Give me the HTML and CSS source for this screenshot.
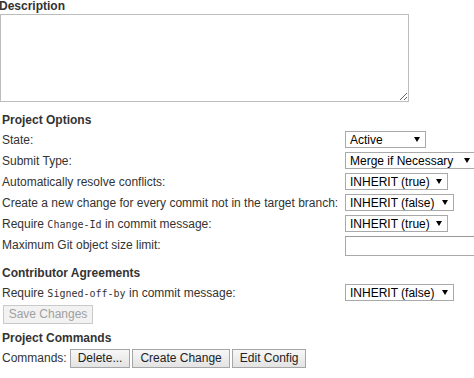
FILE: index.html
```html
<!DOCTYPE html>
<html lang="en">
<head>
  <meta charset="UTF-8" />
  <title>Project Settings</title>
  <link rel="stylesheet" href="styles.css">
</head>
<body>
  <div class="page">
    <h2 class="title desc-title">Description</h2>
    <textarea class="description"></textarea>

    <h2 class="title options-title">Project Options</h2>
    <table class="options">
      <tr>
        <td class="label">State:</td>
        <td><span class="select"><select class="w-state">
          <option>Active</option><option>Read Only</option><option>Hidden</option>
        </select></span></td>
      </tr>
      <tr>
        <td class="label">Submit Type:</td>
        <td><span class="select"><select class="w-submit">
          <option>Merge if Necessary</option><option>Fast Forward Only</option><option>Rebase if Necessary</option>
        </select></span></td>
      </tr>
      <tr>
        <td class="label">Automatically resolve conflicts:</td>
        <td><span class="select"><select class="w-true">
          <option>INHERIT (true)</option><option>TRUE</option><option>FALSE</option>
        </select></span></td>
      </tr>
      <tr>
        <td class="label">Create a new change for every commit not in the target branch:</td>
        <td><span class="select"><select class="w-false">
          <option>INHERIT (false)</option><option>TRUE</option><option>FALSE</option>
        </select></span></td>
      </tr>
      <tr>
        <td class="label">Require <code>Change-Id</code> in commit message:</td>
        <td><span class="select"><select class="w-true">
          <option>INHERIT (true)</option><option>TRUE</option><option>FALSE</option>
        </select></span></td>
      </tr>
      <tr class="input-row">
        <td class="label">Maximum Git object size limit:</td>
        <td><input type="text" class="size-limit"></td>
      </tr>
    </table>

    <h2 class="title agreements-title">Contributor Agreements</h2>
    <table class="options">
      <tr>
        <td class="label">Require <code>Signed-off-by</code> in commit message:</td>
        <td><span class="select"><select class="w-false">
          <option>INHERIT (false)</option><option>TRUE</option><option>FALSE</option>
        </select></span></td>
      </tr>
    </table>

    <button class="btn save" disabled>Save Changes</button>

    <h2 class="title commands-title">Project Commands</h2>
    <div class="commands">
      <span class="commands-label">Commands:</span>
      <div class="command-buttons">
        <button class="btn">Delete...</button>
        <button class="btn">Create Change</button>
        <button class="btn">Edit Config</button>
      </div>
    </div>
  </div>
</body>
</html>
```

FILE: styles.css
```css
body {
  margin: 0;
  font-family: 'Liberation Sans', Arial, sans-serif;
  font-size: 12px;
  color: #333;
  background: #fff;
  overflow: hidden;
}

.title {
  font-size: 12px;
  font-weight: bold;
  line-height: 14px;
  color: #333;
  margin: 0;
  padding-left: 2px;
}

.desc-title {
  margin-top: -1px;
  padding-left: 0;
  margin-left: -1px;
}

.description {
  display: block;
  box-sizing: border-box;
  width: 409px;
  height: 88px;
  margin: 1px 0 0 0;
  border: 1px solid #bdbdbd;
  font-family: inherit;
}

.options-title {
  margin-top: 11px;
}

.agreements-title {
  margin-top: 8px;
}

.commands-title {
  margin-top: 7px;
}

.options {
  border-collapse: collapse;
  table-layout: fixed;
  width: 490px;
  margin-top: 2px;
}

.options td {
  padding: 2px;
  vertical-align: baseline;
  white-space: nowrap;
  line-height: 14px;
}

.options td.label {
  box-sizing: border-box;
  width: 343px;
}

code {
  font-family: 'DejaVu Sans Mono', monospace;
  font-size: 10px;
}

.select {
  position: relative;
  display: inline-block;
}

.select::after {
  content: "";
  position: absolute;
  right: 6px;
  top: 6px;
  border-left: 3px solid transparent;
  border-right: 3px solid transparent;
  border-top: 5px solid #000;
  pointer-events: none;
}

select {
  -webkit-appearance: none;
  appearance: none;
  box-sizing: border-box;
  height: 17px;
  padding: 0 14px 0 4px;
  margin: 0;
  border: 1px solid #a9a9a9;
  border-radius: 0;
  background: #fff;
  font-family: inherit;
  font-size: 12px;
  color: #000;
}

.w-state { width: 81px; }
.w-submit { width: 131px; }
.w-true { width: 103px; }
.w-false { width: 109px; }

.size-limit {
  box-sizing: border-box;
  width: 140px;
  height: 20px;
  margin: 0;
  border: 1px solid #a9a9a9;
  border-top-color: #999;
  font-family: inherit;
  font-size: 12px;
  vertical-align: middle;
}

.btn {
  box-sizing: border-box;
  height: 19px;
  margin: 0;
  padding: 0 7px;
  border: 1px solid #a6a6a6;
  border-radius: 0;
  background: linear-gradient(#f7f7f7, #e3e3e3);
  font-family: inherit;
  font-size: 12px;
  color: #222;
  line-height: 17px;
}

.save {
  display: block;
  margin: 2px 0 0 3px;
  width: 90px;
  padding: 0;
  border-color: #c9c9c9;
  background: #f2f2f2;
  color: #a0a0a0;
}

.commands {
  display: flex;
  align-items: baseline;
  gap: 3px;
  margin-top: 4px;
  padding-left: 2px;
}

.command-buttons {
  display: flex;
  gap: 2px;
}
```
